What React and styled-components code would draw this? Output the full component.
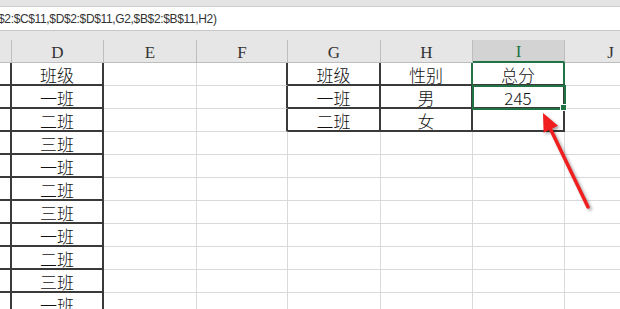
import React from "react";
import styled, { createGlobalStyle } from "styled-components";

const GlobalStyle = createGlobalStyle`
  html, body { margin: 0; padding: 0; background: #ffffff; overflow: hidden; }
  body { width: 620px; height: 309px; }
`;

const GREEN = "#217346";
const DARK = "#3a3a3a";
const LIGHT = "#d9d9d9";

const Page = styled.div`
  position: relative;
  width: 620px;
  height: 309px;
  overflow: hidden;
  background: #ffffff;
  display: flex;
  flex-direction: column;
`;

const TopStrip = styled.div`
  height: 6px;
  flex: none;
  background: #e4e4e4;
  border-bottom: 1px solid #cdcdcd;
`;

const FormulaBar = styled.div`
  height: 23px;
  flex: none;
  background: #ffffff;
  border-bottom: 1px solid #c8c8c8;
  display: flex;
  align-items: center;
  font-family: "Liberation Sans", Arial, sans-serif;
  font-size: 12px;
  letter-spacing: -0.35px;
  color: #333333;
  white-space: nowrap;
  text-indent: -2px;
`;

const Gap = styled.div`
  height: 9px;
  flex: none;
  background: #e6e6e6;
`;

const Sheet = styled.div`
  display: grid;
  grid-template-columns: 12px 92px 93px 91px 93px 92px 92px 92px;
  grid-auto-rows: 23px;
  width: max-content;
`;

const HeaderCell = styled.div`
  box-sizing: border-box;
  display: flex;
  align-items: center;
  justify-content: center;
  background: ${(p) => (p.$active ? "#d3d3d3" : "#e6e6e6")};
  color: ${(p) => (p.$active ? GREEN : "#333333")};
  border-right: 1px solid #bdbdbd;
  border-bottom: ${(p) => (p.$active ? `2px solid ${GREEN}` : "1px solid #bdbdbd")};
  font-family: "Liberation Serif", "Times New Roman", serif;
  font-size: 17px;
  padding-top: 3px;
`;

const Cell = styled.div`
  box-sizing: border-box;
  position: relative;
  display: flex;
  align-items: center;
  justify-content: center;
  background: #ffffff;
  border-right: ${(p) => p.$rw}px solid ${(p) => p.$rc};
  border-bottom: ${(p) => p.$bw}px solid ${(p) => p.$bc};
  font-family: "Noto Sans CJK SC", "Noto Sans", sans-serif;
  font-weight: 300;
  font-size: 17px;
  color: #111111;
  padding-top: 2px;
  white-space: nowrap;
  ${(p) =>
    p.$selected &&
    `
    z-index: 2;
    outline: 2px solid ${GREEN};
    outline-offset: -1px;
    &::after {
      content: "";
      position: absolute;
      right: -4px;
      bottom: -4px;
      width: 5px;
      height: 5px;
      background: ${GREEN};
      border: 1px solid #ffffff;
    }
  `}
`;

const ArrowLayer = styled.svg`
  position: absolute;
  left: 0;
  top: 0;
  width: 620px;
  height: 309px;
  pointer-events: none;
  filter: drop-shadow(2px 2px 1.5px rgba(0, 0, 0, 0.35));
`;

const COLS = ["C", "D", "E", "F", "G", "H", "I", "J"];

const dCol = ["班级", "一班", "二班", "三班", "一班", "二班", "三班", "一班", "二班", "三班", "一班"];
const table = {
  1: { G: "班级", H: "性别", I: "总分" },
  2: { G: "一班", H: "男", I: "245" },
  3: { G: "二班", H: "女", I: "" },
};

const bordered = (r, c) => {
  if (c === "C" || c === "D") return r >= 1 && r <= 11;
  if (c === "G" || c === "H" || c === "I") return r >= 1 && r <= 3;
  return false;
};

const valueAt = (r, c) => {
  if (c === "D") return dCol[r - 1];
  if (table[r] && table[r][c] !== undefined) return table[r][c];
  return "";
};

export default function App() {
  const rows = Array.from({ length: 11 }, (_, i) => i + 1);
  return (
    <Page>
      <GlobalStyle />
      <TopStrip />
      <FormulaBar>$2:$C$11,$D$2:$D$11,G2,$B$2:$B$11,H2)</FormulaBar>
      <Gap />
      <Sheet>
        {COLS.map((c, i) => (
          <HeaderCell key={"h" + c} $active={c === "I"}>
            {i === 0 ? "" : c}
          </HeaderCell>
        ))}
        {rows.map((r) =>
          COLS.map((c, ci) => {
            const right = COLS[ci + 1];
            let rc = LIGHT;
            let rw = 1;
            if (bordered(r, c) || (right && bordered(r, right))) {
              rc = DARK;
              rw = 2;
            }
            if (r === 1 && (c === "H" || c === "I")) rc = GREEN;
            let bc = LIGHT;
            let bw = 1;
            if (bordered(r, c) || bordered(r + 1, c)) {
              bc = DARK;
              bw = 2;
            }
            return (
              <Cell
                key={r + c}
                $rc={rc}
                $rw={rw}
                $bc={bc}
                $bw={bw}
                $selected={r === 2 && c === "I"}
              >
                {valueAt(r, c)}
              </Cell>
            );
          })
        )}
      </Sheet>
      <ArrowLayer viewBox="0 0 620 309">
        <line x1="588" y1="207" x2="550" y2="128" stroke="#f01e1e" strokeWidth="3.5" strokeLinecap="round" />
        <polygon points="543,113 558,125.7 543.6,132.7" fill="#f01e1e" />
      </ArrowLayer>
    </Page>
  );
}
